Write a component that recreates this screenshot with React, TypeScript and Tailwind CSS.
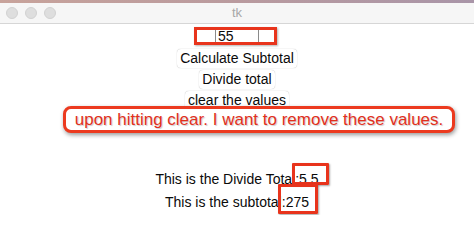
import React from "react";

const font = { fontFamily: '"Liberation Sans", Arial, sans-serif' };

function TrafficLight() {
  return <span className="block h-[12px] w-[12px] rounded-full border border-[#d2d2d2] bg-[#dedede]" />;
}

function TkButton({ label }: { label: string }) {
  return (
    <div className="flex h-[21px] items-center justify-center">
      <span className="rounded-[4px] bg-white px-[3px] text-[14px] leading-[19px] text-[#0a0a0a] shadow-[0_0_1px_rgba(0,0,0,0.35)]">
        {label}
      </span>
    </div>
  );
}

function ValueLine({ label, value, box }: { label: string; value: string; box: string }) {
  return (
    <div className="flex h-[23px] items-center justify-center text-[14px] text-[#0a0a0a]">
      <span>{label}</span>
      <span className="relative">
        :{value}
        <span className={`absolute rounded-[1px] border-[3px] border-[#e8341c] shadow-[1px_1px_2px_rgba(0,0,0,0.35)] ${box}`} />
      </span>
    </div>
  );
}

export default function App() {
  return (
    <div className="relative h-[215px] w-[474px] overflow-hidden bg-white" style={font}>
      {/* window behind */}
      <div className="h-[3px] bg-gradient-to-r from-[#c8a39b] via-[#b99a9e] to-[#a995a8]" />
      {/* title bar */}
      <div className="relative flex h-[21px] items-center justify-center border-b border-[#d6d6d6] bg-[#f6f6f6]">
        <div className="absolute left-[6px] top-[4px] flex gap-[7px]">
          <TrafficLight />
          <TrafficLight />
          <TrafficLight />
        </div>
        <span className="text-[13px] text-[#a8a8a8]">tk</span>
      </div>

      {/* entry */}
      <div className="flex h-[24px] items-center justify-center">
        <div className="relative">
          <div className="flex h-[17px] w-[44px] items-center border-x border-[#8a8a8a] bg-white pl-[2px] text-[14px] leading-none text-[#0a0a0a]">
            55
          </div>
          <span className="absolute -left-[21px] -top-[1px] h-[18px] w-[83px] border-[3px] border-[#e8341c] shadow-[1px_1px_2px_rgba(0,0,0,0.3)]" />
        </div>
      </div>

      <TkButton label="Calculate Subtotal" />
      <TkButton label="Divide total" />
      <TkButton label="clear the values" />

      {/* annotation */}
      <div className="absolute left-[63px] top-[106px] flex h-[27px] w-[392px] items-center justify-center rounded-[8px] border-[3px] border-[#ec3a1f] bg-white shadow-[1px_2px_4px_rgba(0,0,0,0.4)]">
        <span className="text-[17px] leading-none text-[#e2301c] [text-shadow:1px_1px_1px_rgba(0,0,0,0.2)]">
          upon hitting clear. I want to remove these values.
        </span>
      </div>

      <div className="h-[57px]" />
      <ValueLine label="This is the Divide Total" value="5.5" box="-left-[3px] -top-[6px] h-[22px] w-[37px]" />
      <ValueLine label="This is the subtotal" value="275" box="-left-[4px] -top-[8px] h-[30px] w-[40px]" />
    </div>
  );
}
